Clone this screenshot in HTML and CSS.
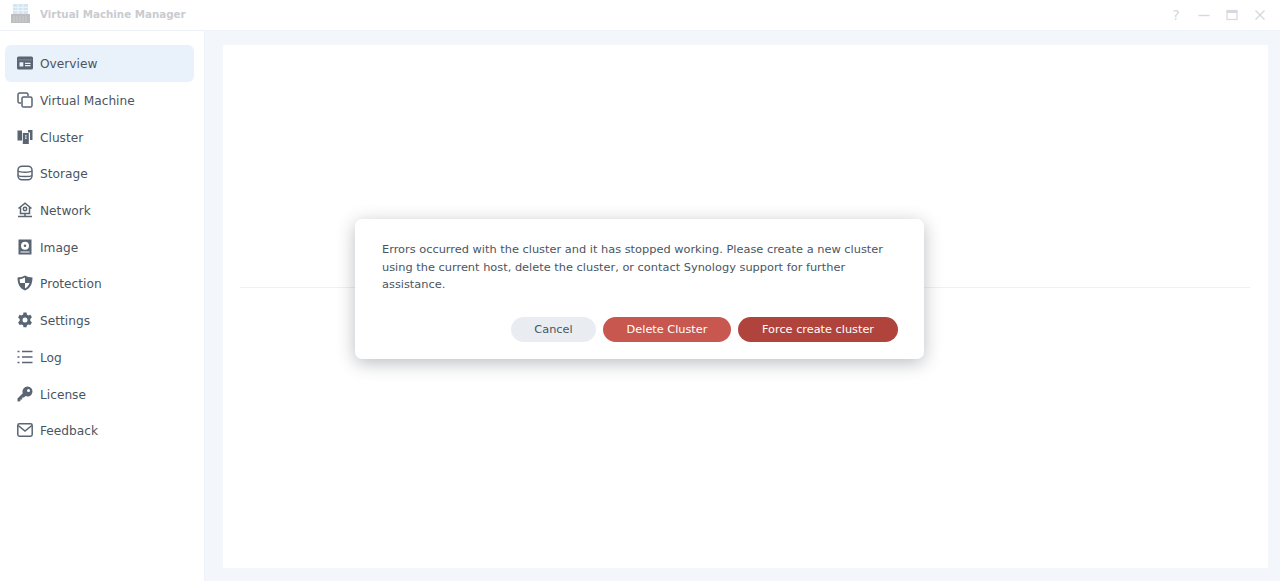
FILE: index.html
```html
<!DOCTYPE html>
<html lang="en">
<head>
<meta charset="utf-8">
<title>Virtual Machine Manager</title>
<link rel="stylesheet" href="styles.css">
</head>
<body>
<div class="app">
  <header class="titlebar">
    <svg class="app-logo" viewBox="0 0 22 22" width="22" height="22">
      <rect x="3" y="2" width="15" height="10" fill="#d3e5f3"/>
      <path d="M8 2v10M13 2v10M3 5.300h15M3 8.600h15" stroke="#eef5fa" stroke-width="1"/>
      <rect x="1" y="12" width="19" height="9" fill="#bcbec1"/>
      <path d="M3 15h15M3 17h15M3 19h15" stroke="#d0d2d4" stroke-width=".8" stroke-dasharray="2 1"/>
    </svg>
    <span class="app-title">Virtual Machine Manager</span>
    <div class="win-controls">
      <span class="help">?</span>
      <svg viewBox="0 0 12 12" width="12" height="12"><path d="M0.500 6.500h11" stroke="#d5d8dc" stroke-width="1.400"/></svg>
      <svg viewBox="0 0 12 12" width="12" height="12"><rect x="1" y="1.500" width="10" height="9" fill="none" stroke="#d5d8dc" stroke-width="1.200"/><rect x="1" y="1.500" width="10" height="2.500" fill="#d5d8dc"/></svg>
      <svg viewBox="0 0 12 12" width="12" height="12"><path d="M1.500 1.500l9 9M10.500 1.500l-9 9" stroke="#d5d8dc" stroke-width="1.400"/></svg>
    </div>
  </header>
  <div class="body">
    <nav class="sidebar">
      <a class="nav-item active"><svg class="ic" viewBox="0 0 16 16"><path fill="#596573" fill-rule="evenodd" d="M1.500 1.500h13A1.500 1.500 0 0 1 16 3v10a1.500 1.500 0 0 1-1.500 1.500h-13A1.500 1.500 0 0 1 0 13V3a1.500 1.500 0 0 1 1.500-1.500zM2.500 7.200h3.800v4.300H2.500zM8 7.800h5.500v1.200H8zM8 10h5.500v1.200H8z"/><path d="M1.300 4.900h13.400" stroke="#8d96a1" stroke-width=".8"/></svg><span>Overview</span></a>
      <a class="nav-item"><svg class="ic" viewBox="0 0 16 16"><path fill="none" stroke="#596573" stroke-width="1.500" d="M11 4V2.600A1.600 1.600 0 0 0 9.400 1H2.600A1.600 1.600 0 0 0 1 2.600v6.800A1.600 1.600 0 0 0 2.600 11H4"/><rect x="5" y="5" width="10" height="10" rx="1.600" fill="none" stroke="#596573" stroke-width="1.500"/></svg><span>Virtual Machine</span></a>
      <a class="nav-item"><svg class="ic" viewBox="0 0 16 16"><path fill="#596573" fill-rule="evenodd" d="M.5 1.500h4.500v10H.5zM11 1h4.500v10H13V3.500h-2zM5.800 4h6v11h-6zM8 6.200v1.200h1.600V6.200zM8 8.600v1.200h1.600V8.600z"/></svg><span>Cluster</span></a>
      <a class="nav-item"><svg class="ic" viewBox="0 0 16 16"><g fill="none" stroke="#596573" stroke-width="1.500"><rect x="1" y="1.200" width="14" height="13.600" rx="4"/><path d="M1 6c2 1.600 12 1.600 14 0M1 10.500c2 1.400 12 1.400 14 0" /></g></svg><span>Storage</span></a>
      <a class="nav-item"><svg class="ic" viewBox="0 0 16 16"><g fill="none" stroke="#596573" stroke-width="1.500"><path d="M1.500 6.500 8 1.200l6.500 5.300M3.500 5.500v6h9v-6"/><circle cx="8" cy="7" r="1.700"/><path d="M8 11.500v2.500M1 14.500h14"/></g></svg><span>Network</span></a>
      <a class="nav-item"><svg class="ic" viewBox="0 0 16 16"><path fill="#596573" fill-rule="evenodd" d="M1.500.5h13v15h-13zM8 2.800a4 4 0 1 0 0 8 4 4 0 0 0 0-8zM8 5.500a1.300 1.300 0 1 1 0 2.600 1.300 1.300 0 0 1 0-2.600zM3.500 12.500v1h9v-1z"/></svg><span>Image</span></a>
      <a class="nav-item"><svg class="ic" viewBox="0 0 16 16"><path fill="#596573" fill-rule="evenodd" d="M8 .5c2 1.300 4.500 2 7.500 2 0 6-2 11-7.500 13C2.500 13.500.5 8.500.5 2.500c3 0 5.500-.7 7.500-2zM8 2.600c-1.500.8-3.400 1.400-5.400 1.600.1 1.300.3 2.500.6 3.800H8zM8 8v5.400c2.200-1.100 3.700-3 4.500-5.400z"/></svg><span>Protection</span></a>
      <a class="nav-item"><svg class="ic" viewBox="0 0 16 16"><path fill="#596573" fill-rule="evenodd" d="M6.500.5h3l.4 2 1.500.9 2-.7 1.500 2.600-1.600 1.700v1.800l1.600 1.700-1.500 2.600-2-.7-1.500.9-.4 2h-3l-.4-2-1.500-.9-2 .7-1.500-2.600 1.600-1.700V7.100L1.100 5.400l1.500-2.600 2 .7 1.500-.9zM8 5.500a2.500 2.500 0 1 0 0 5 2.500 2.500 0 0 0 0-5z"/></svg><span>Settings</span></a>
      <a class="nav-item"><svg class="ic" viewBox="0 0 16 16"><path stroke="#596573" stroke-width="1.500" d="M5 2.500h10.500M5 8h10.500M5 13.500h10.500M.5 2.500h2M.5 8h2M.5 13.500h2"/></svg><span>Log</span></a>
      <a class="nav-item"><svg class="ic" viewBox="0 0 16 16"><path fill="#596573" fill-rule="evenodd" d="M10.500.5a5 5 0 1 1-2 9.600L7 11.600H5.200v1.800H3.400v1.800L.5 15.500v-3l5.300-5.300A5 5 0 0 1 10.500.5zM11.500 3a1.500 1.500 0 1 0 0 3 1.500 1.500 0 0 0 0-3z"/></svg><span>License</span></a>
      <a class="nav-item"><svg class="ic" viewBox="0 0 16 16"><g fill="none" stroke="#596573" stroke-width="1.500"><rect x=".8" y="1.800" width="14.400" height="12.400" rx="1.600"/><path d="M1.200 3.500 8 9l6.800-5.500"/></g></svg><span>Feedback</span></a>
    </nav>
    <main class="content">
      <div class="panel"><hr class="divider"></div>
    </main>
  </div>
</div>
<div class="dialog">
  <p class="dialog-text">Errors occurred with the cluster and it has stopped working. Please create a new cluster using the current host, delete the cluster, or contact Synology support for further assistance.</p>
  <div class="dialog-actions">
    <button class="btn btn-cancel">Cancel</button>
    <button class="btn btn-delete">Delete Cluster</button>
    <button class="btn btn-force">Force create cluster</button>
  </div>
</div>
</body>
</html>
```
FILE: styles.css
```css
* { box-sizing: border-box; }
html, body { margin: 0; height: 100%; overflow: hidden; }
body { font-family: "DejaVu Sans", Verdana, sans-serif; color: #4f5a66; background: #fff; }
.app { display: flex; flex-direction: column; height: 581px; }
.titlebar { height: 31px; flex: none; display: flex; align-items: center; padding: 0 14px 0 10px; background: #fff; border-bottom: 1px solid #eef1f5; }
.app-logo { margin-top: -4px; margin-right: 8px; }
.app-title { font-size: 10.3px; font-weight: 700; color: #c9cccf; margin-bottom: 2px; }
.win-controls { margin-left: auto; display: flex; align-items: center; gap: 16px; }
.help { font-size: 14px; color: #d5d8dc; width: 12px; text-align: center; }
.body { flex: 1; display: flex; min-height: 0; }
.sidebar { width: 205px; flex: none; background: #fff; border-right: 1px solid #eef1f5; padding: 14px 10px 0 5px; }
.nav-item { display: flex; align-items: center; height: 36.7px; padding-left: 13px; font-size: 12.2px; color: #4a5561; border-radius: 6px; }
.nav-item span { margin-top: 2px; }
.nav-item.active { background: #e9f1fb; }
.ic { width: 16px; height: 16px; margin-left: -1px; margin-right: 7px; flex: none; }
.content { flex: 1; background: #f3f6fa; padding: 14px 12px 13px 18px; min-width: 0; }
.panel { height: 100%; background: #fff; padding: 242px 18px 0 17px; }
.divider { margin: 0; border: 0; border-top: 1px solid #eef0f3; }
.dialog { position: absolute; left: 355px; top: 219px; width: 569px; height: 140px; background: #fff; border-radius: 7px; box-shadow: 0 4px 18px rgba(40, 50, 60, .32); padding: 22px 26px 0 27px; }
.dialog-text { margin: 0; font-size: 11.37px; line-height: 17.5px; color: #4a5561; }
.dialog-actions { display: flex; justify-content: flex-end; gap: 7px; margin-top: 23px; }
.btn { height: 25px; border: 0; border-radius: 13px; font-family: inherit; font-size: 11.3px; padding: 0; }
.btn-cancel { width: 85px; background: #e9edf2; color: #4a5561; }
.btn-delete { width: 128px; background: #c8574f; color: #fff; }
.btn-force { width: 160px; background: #b0443c; color: #fff; }
```
